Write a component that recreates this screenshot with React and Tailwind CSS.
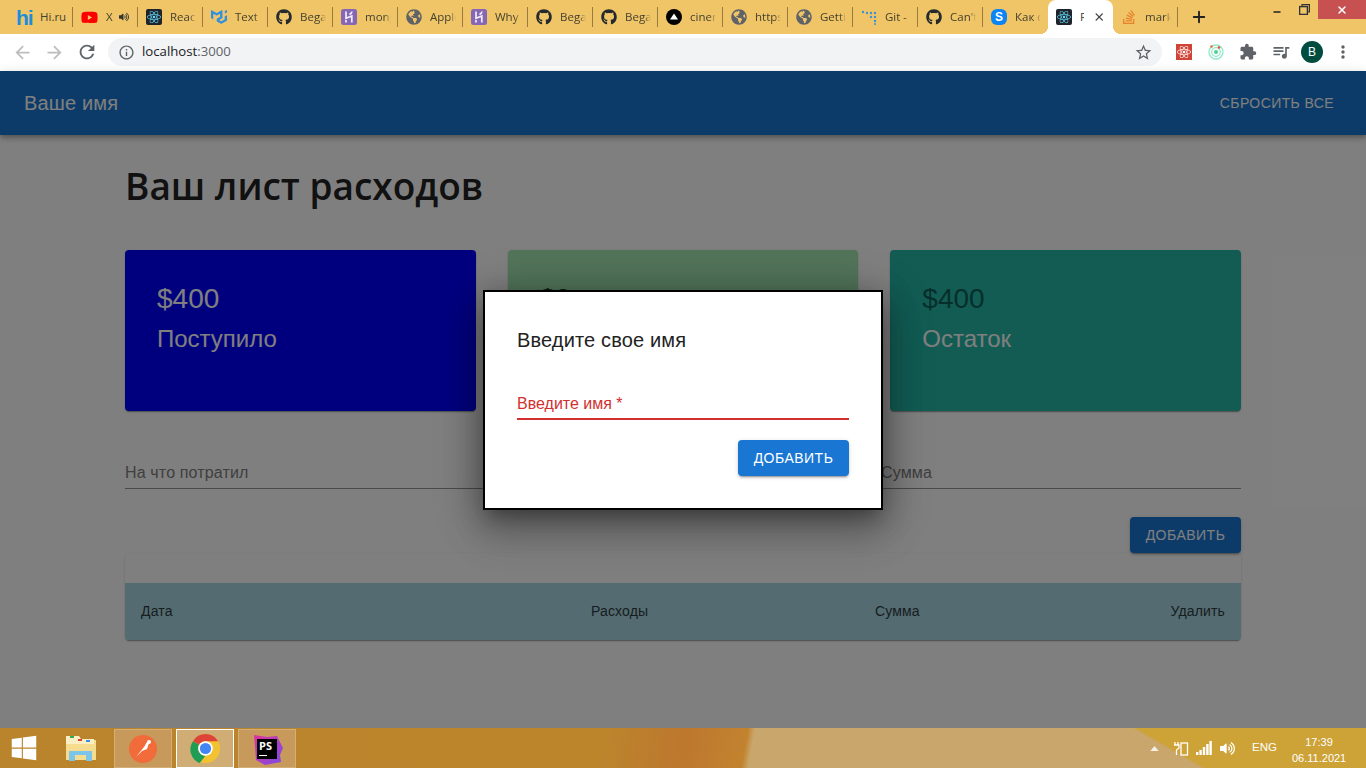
import React from 'react';
import { Plus, X, Minus } from 'lucide-react';
import { FaGithub, FaYoutube, FaVolumeUp, FaGlobeAmericas, FaStackOverflow, FaWindows, FaReact } from 'react-icons/fa';
import { MdArrowBack, MdArrowForward, MdRefresh, MdInfoOutline, MdStarBorder, MdExtension, MdQueueMusic, MdMoreVert } from 'react-icons/md';
import { SiMui } from 'react-icons/si';

const sans = "font-['Liberation_Sans',Arial,sans-serif]";
const ui = "font-['Open_Sans','Noto_Sans',sans-serif]";

const ReactIcon = () => (
  <span className="w-4 h-4 rounded-[2px] bg-[#20232a] flex items-center justify-center shrink-0">
    <FaReact className="w-[14px] h-[14px] text-[#61dafb]" />
  </span>
);
const Github = () => <FaGithub className="w-4 h-4 text-[#24292e] shrink-0" />;
const Globe = () => <FaGlobeAmericas className="w-4 h-4 text-[#5f6368] shrink-0" />;

const Heroku = () => (
  <svg viewBox="0 0 16 16" className="w-4 h-4 shrink-0">
    <rect width="16" height="16" rx="2.5" fill="#8667b5" />
    <path d="M5 2.5 V9.3 L10.8 7 V13.5 M11 2.5 C10.8 4 10 4.8 8.5 5.6 M5 11 V13.5" fill="none" stroke="#f3eefa" strokeWidth="1.7" />
  </svg>
);

const GitDots = () => (
  <svg viewBox="0 0 16 16" className="w-4 h-4 shrink-0" fill="#3f8fd6">
    <circle cx="2" cy="3" r="1.2" /><circle cx="6" cy="4" r="1.2" /><circle cx="10" cy="4" r="1.2" /><circle cx="14" cy="4" r="1.2" />
    <circle cx="10" cy="8" r="1.2" /><circle cx="14" cy="8" r="1.2" /><circle cx="14" cy="12" r="1.2" /><circle cx="14" cy="15" r="1" />
  </svg>
);
const Cinema = () => (
  <svg viewBox="0 0 16 16" className="w-4 h-4 shrink-0">
    <circle cx="8" cy="8" r="8" fill="#000" />
    <path d="M8 4.5 L12 10.5 H4 Z" fill="#fff" />
  </svg>
);
const Skype = () => (
  <span className={`w-4 h-4 rounded-[6px] bg-[#0b84f5] text-white text-[12px] font-bold flex items-center justify-center shrink-0 ${sans}`}>S</span>
);

const tabs = [
  { icon: <span className={`w-4 text-[21px] leading-none font-bold tracking-[-1px] text-[#1c8ddb] ${sans}`}>hi</span>, title: 'Hi.ru', full: true },
  { icon: <FaYoutube className="w-[17px] h-[17px] text-[#f00] shrink-0" />, title: 'X', audio: true },
  { icon: <ReactIcon />, title: 'React' },
  { icon: <SiMui className="w-4 h-4 text-[#2f8fe0] shrink-0" />, title: 'Text' },
  { icon: <Github />, title: 'Bega' },
  { icon: <Heroku />, title: 'mong' },
  { icon: <Globe />, title: 'Apple' },
  { icon: <Heroku />, title: 'Why' },
  { icon: <Github />, title: 'Bega' },
  { icon: <Github />, title: 'Bega' },
  { icon: <Cinema />, title: 'cinem' },
  { icon: <Globe />, title: 'https' },
  { icon: <Globe />, title: 'Getti' },
  { icon: <GitDots />, title: 'Git -' },
  { icon: <Github />, title: "Can't" },
  { icon: <Skype />, title: 'Как с' },
  { icon: <ReactIcon />, title: 'React', active: true },
  { icon: <FaStackOverflow className="w-4 h-4 text-[#e8812b] shrink-0" />, title: 'mark' },
];

function Tab({ tab, hideSep }) {
  if (tab.active) {
    return (
      <div className="relative w-[65px] h-[34px] bg-white rounded-t-lg flex items-center pl-2 pr-2 shrink-0">
        <span className="absolute -left-2 bottom-0 w-2 h-2 bg-[radial-gradient(circle_at_0_0,transparent_8px,white_8px)]" />
        <span className="absolute -right-2 bottom-0 w-2 h-2 bg-[radial-gradient(circle_at_100%_0,transparent_8px,white_8px)]" />
        {tab.icon}
        <span className="ml-2 w-[4px] overflow-hidden text-[11.5px] text-[#3c4043]">{tab.title}</span>
        <X className="w-[14px] h-[14px] ml-[9px] text-[#3c4043]" strokeWidth={2.5} />
      </div>
    );
  }
  const fade = tab.full ? '' : '[mask-image:linear-gradient(to_right,#000_75%,transparent)]';
  return (
    <div className="w-[65px] h-[34px] flex items-center pl-2 shrink-0 relative">
      {tab.icon}
      <span className={`ml-2 text-[11.5px] text-[#45412f] whitespace-nowrap overflow-hidden ${tab.audio ? 'w-[10px]' : 'w-[26px]'} ${fade}`}>{tab.title}</span>
      {tab.audio && <FaVolumeUp className="w-[10px] h-[10px] ml-[3px] text-[#333]" />}
      {!hideSep && <span className="absolute right-0 top-[7px] h-5 w-px bg-[#9a7b3f]" />}
    </div>
  );
}

function TabStrip() {
  return (
    <div className={`h-[34px] bg-[#efc567] flex pl-2 ${ui}`}>
      {tabs.map((t, i) => (
        <Tab key={i} tab={t} hideSep={i === 15 || t.active} />
      ))}
      <div className="flex items-center pl-3 h-[34px]">
        <Plus className="w-[18px] h-[18px] text-[#222]" strokeWidth={2.5} />
      </div>
      <div className="ml-auto flex items-start h-[19px]">
        <Minus className="w-[10px] h-[10px] mt-[7px] mr-[17px] text-[#222]" strokeWidth={4} />
        <svg viewBox="0 0 11 11" className="w-[11px] h-[11px] mt-[4px] mr-[8px]" fill="none" stroke="#333" strokeWidth="1.2">
          <rect x="0.6" y="2.6" width="7.8" height="7.8" fill="#efc567" strokeWidth="1.4" />
          <path d="M3 2.5 V0.6 H10.4 V8 H8.5" />
        </svg>
        <div className="w-[48px] h-[19px] bg-[#c75050] flex items-center justify-center">
          <X className="w-[12px] h-[12px] text-white" strokeWidth={3} />
        </div>
      </div>
    </div>
  );
}

function Toolbar() {
  return (
    <div className={`h-[37px] bg-white flex items-center pb-[1px] ${ui}`}>
      <div className="w-[108px] flex items-center pl-[12px] gap-[11px] shrink-0">
        <MdArrowBack className="w-[21px] h-[21px] text-[#bcbdbf]" />
        <MdArrowForward className="w-[21px] h-[21px] text-[#bcbdbf]" />
        <MdRefresh className="w-[22px] h-[22px] text-[#5f6368]" />
      </div>
      <div className="w-[1054px] h-7 rounded-full bg-[#f1f3f4] flex items-center pl-[10px] pr-[9px]">
        <MdInfoOutline className="w-[17px] h-[17px] text-[#5f6368]" />
        <span className="ml-[7px] text-[13.2px] text-[#202124]">localhost<span className="text-[#5f6368]">:3000</span></span>
        <MdStarBorder className="w-[19px] h-[19px] ml-auto text-[#5f6368]" />
      </div>
      <div className="flex-1 flex items-center pl-[14px]">
        <span className="w-4 h-4 bg-[#d04437] flex items-center justify-center shrink-0">
          <FaReact className="w-[14px] h-[14px] text-white" />
        </span>
        <svg viewBox="0 0 16 16" className="w-4 h-4 ml-4 shrink-0" fill="none">
          <circle cx="8" cy="8" r="7" stroke="#8ee8c8" strokeWidth="1.3" />
          <circle cx="8" cy="8" r="4.3" stroke="#8ee8c8" strokeWidth="1.2" />
          <circle cx="8" cy="8" r="2" fill="#4cd38f" />
          <circle cx="3.5" cy="2.5" r="1.3" fill="#ef6c3b" />
          <circle cx="11" cy="3.5" r="1.3" fill="#ef4b3b" />
        </svg>
        <MdExtension className="w-[18px] h-[18px] ml-[15px] text-[#5f6368] shrink-0" />
        <MdQueueMusic className="w-[20px] h-[20px] ml-[14px] text-[#5f6368] shrink-0" />
        <span className={`w-[22px] h-[22px] ml-[10px] rounded-full bg-[#004d40] text-white text-[12px] flex items-center justify-center shrink-0 ${sans}`}>B</span>
        <MdMoreVert className="w-[20px] h-[20px] ml-[10px] text-[#5f6368] shrink-0" />
      </div>
    </div>
  );
}

function ContainedButton({ children }) {
  return (
    <button className="w-[111px] h-9 rounded bg-[#1976d2] text-white text-sm tracking-[0.5px] uppercase shadow-[0_3px_1px_-2px_rgba(0,0,0,0.2),0_2px_2px_0_rgba(0,0,0,0.14),0_1px_5px_0_rgba(0,0,0,0.12)]">
      {children}
    </button>
  );
}

function Card({ bg, amount, label, amountColor }) {
  return (
    <div className={`h-[161px] rounded ${bg} px-8 pt-8 shadow-[0_2px_1px_-1px_rgba(0,0,0,0.2),0_1px_1px_0_rgba(0,0,0,0.14),0_1px_3px_0_rgba(0,0,0,0.12)]`}>
      <div className={`text-[28px] leading-[34px] ${amountColor}`}>{amount}</div>
      <div className="text-2xl leading-[32px] mt-[7px] text-white">{label}</div>
    </div>
  );
}

function Page() {
  return (
    <div className={`relative flex-1 bg-white ${sans}`}>
      <header className="h-16 bg-[#1976d2] flex items-center justify-between pl-6 pr-8 text-white shadow-[0_2px_4px_-1px_rgba(0,0,0,0.2),0_4px_5px_0_rgba(0,0,0,0.14),0_1px_10px_0_rgba(0,0,0,0.12)]">
        <span className="text-xl tracking-[0.15px]">Ваше имя</span>
        <span className="text-sm tracking-[0.4px] uppercase">Сбросить все</span>
      </header>

      <main className="w-[1116px] ml-[125px]">
        <h1 className={`pt-[26px] text-[37px] leading-[50px] font-semibold text-[#222] ${ui}`}>Ваш лист расходов</h1>

        <div className="grid grid-cols-3 gap-8 mt-[39px]">
          <Card bg="bg-[#0000ff]" amount="$400" label="Поступило" amountColor="text-white" />
          <Card bg="bg-[#a5e8b2]" amount="$0" label="Потрачено" amountColor="text-[#1a3a20]" />
          <Card bg="bg-[#24b8a8]" amount="$400" label="Остаток" amountColor="text-[#0d5f59]" />
        </div>

        <div className="flex gap-[14px] mt-[49px]">
          <div className="flex-1 h-[29px] pt-px border-b border-[#949494] text-base leading-6 tracking-[0.15px] text-[#808080]">На что потратил</div>
          <div className="w-[360px] h-[29px] pt-px border-b border-[#949494] text-base leading-6 tracking-[0.15px] text-[#808080]">Сумма</div>
        </div>

        <div className="flex justify-end mt-7">
          <ContainedButton>Добавить</ContainedButton>
        </div>

        <div className="rounded bg-white pt-[30px] shadow-[0_2px_1px_-1px_rgba(0,0,0,0.2),0_1px_1px_0_rgba(0,0,0,0.14),0_1px_3px_0_rgba(0,0,0,0.12)]">
          <div className="h-[57px] bg-[#a9d6e2] rounded-b flex items-center pb-[2px] px-4 text-sm tracking-[0.15px] text-[#2e3c41]">
            <span className="w-[450px]">Дата</span>
            <span className="w-[284px]">Расходы</span>
            <span>Сумма</span>
            <span className="ml-auto">Удалить</span>
          </div>
        </div>
      </main>

      <div className="absolute inset-0 bg-black/50 flex items-center justify-center">
        <div className="w-[400px] h-[220px] bg-white border-2 border-black px-8 pt-8 shadow-[0_11px_15px_-7px_rgba(0,0,0,0.2),0_24px_38px_3px_rgba(0,0,0,0.14),0_9px_46px_8px_rgba(0,0,0,0.12),0_8px_30px_0_rgba(0,0,0,0.3)]">
          <div className="text-xl leading-[32px] tracking-[0.15px] text-[#222]">Введите свое имя</div>
          <div className="mt-[36px] h-[28px] border-b-2 border-[#d32f2f] text-base leading-6 text-[#d32f2f]">Введите имя *</div>
          <div className="flex justify-end mt-[20px]">
            <ContainedButton>Добавить</ContainedButton>
          </div>
        </div>
      </div>
    </div>
  );
}

function ChromeLogo() {
  return (
    <svg viewBox="0 0 32 32" className="w-[31px] h-[31px]">
      <circle cx="16" cy="16" r="15" fill="#f2c230" />
      <path d="M16 1 A15 15 0 0 1 29 8.5 L16 8.5 A7.5 7.5 0 0 0 9.5 12.2 L3 8.5 A15 15 0 0 1 16 1 Z" fill="#db4437" />
      <path d="M3 8.5 L9.5 12.2 A7.5 7.5 0 0 0 16 23.5 L10 31 A15 15 0 0 1 3 8.5 Z" fill="#1f9d55" />
      <circle cx="16" cy="16" r="7.5" fill="#fff" />
      <circle cx="16" cy="16" r="5.8" fill="#4285f4" />
    </svg>
  );
}

function Taskbar() {
  const item = 'w-[58px] h-[39px] mt-px flex items-center justify-center border';
  return (
    <div className={`h-10 flex items-start bg-[linear-gradient(30deg,transparent_83.7%,#cda236_84%),linear-gradient(100deg,#b9842c_0%,#bc852c_44%,#bd772e_50%,#c2832f_54.5%,#c9a66b_55%,#c9a66b_100%)] ${ui}`}>
      <div className="w-[114px] h-10 flex items-center pl-[10px]">
        <FaWindows className="w-[28px] h-[28px] text-white" />
        <svg viewBox="0 0 32 28" className="w-8 h-7 ml-[27px]">
          <path d="M1 6 H31 V26 H1 Z" fill="#f6dc8f" />
          <path d="M1 2 H14 L16 5 H29 V10 H1 Z" fill="#fbeec2" />
          <rect x="5" y="2" width="4" height="2" fill="#35a853" />
          <rect x="13" y="5" width="4" height="2" fill="#d9432f" />
          <rect x="21" y="6" width="4" height="2" fill="#3b8ee0" />
          <path d="M4 17 H27 V27 H21 V21 H10 V27 H4 Z" fill="#7cc4e8" />
        </svg>
      </div>
      <div className={`${item} border-[#d3ae76] bg-[#c79a5c]`}>
        <svg viewBox="0 0 28 28" className="w-7 h-7">
          <circle cx="14" cy="14" r="14" fill="#f26b3a" />
          <path d="M7 22 L15 12 L18 7 L20 8 L18 14 L13 16 Z" fill="#fff" />
          <circle cx="20" cy="7" r="2" fill="#fff" />
        </svg>
      </div>
      <div className={`${item} ml-1 border-white bg-[#d1ad76]`}><ChromeLogo /></div>
      <div className={`${item} ml-1 border-[#d3ae76] bg-[#c79a5c]`}>
        <div className="relative w-[32px] h-[32px] flex items-center justify-center">
          <svg viewBox="0 0 32 32" className="absolute inset-0 w-full h-full">
            <defs>
              <linearGradient id="psBlob" x1="0" y1="0" x2="1" y2="1">
                <stop offset="0" stopColor="#e0319b" />
                <stop offset="1" stopColor="#7a4be8" />
              </linearGradient>
            </defs>
            <path d="M3 2 L16 4 L26 3 L32 15 L29 22 L30 29 L14 32 L5 27 L4 14 Z" fill="url(#psBlob)" />
          </svg>
          <div className="relative w-[20px] h-[20px] bg-black text-white text-[11px] font-bold leading-[11px] pl-[2px] pt-[1px]">
            PS
            <div className="w-[8px] h-px bg-white mt-[4px]" />
          </div>
        </div>
      </div>
      <div className={`ml-auto h-10 flex items-center text-white ${sans}`}>
        <svg viewBox="0 0 10 6" className="w-[9px] h-[5px]" fill="#f4f0e6"><path d="M5 0 L10 6 H0 Z" /></svg>
        <svg viewBox="0 0 16 16" className="w-4 h-4 ml-[14px]" fill="none" stroke="#fff" strokeWidth="1.3">
          <rect x="8" y="3" width="6.5" height="12" />
          <path d="M2 2 V5 M5 2 V5 M1 5 H6 V8 L3.5 10 V15" />
        </svg>
        <svg viewBox="0 0 16 14" className="w-4 h-[14px] ml-[7px]" fill="#fff">
          <rect x="0" y="11" width="2.4" height="3" /><rect x="3.4" y="9" width="2.4" height="5" /><rect x="6.8" y="6" width="2.4" height="8" /><rect x="10.2" y="3" width="2.4" height="11" /><rect x="13.4" y="0" width="2.4" height="14" />
        </svg>
        <FaVolumeUp className="w-[15px] h-[15px] ml-[8px]" />
        <span className="ml-[17px] text-[11.5px]">ENG</span>
        <div className="w-[54px] ml-[15px] mr-[20px] pt-[3px] text-center text-[11px] leading-[16px]">
          <div>17:39</div>
          <div>06.11.2021</div>
        </div>
      </div>
    </div>
  );
}

export default function App() {
  return (
    <div className="w-[1366px] h-[768px] flex flex-col overflow-hidden">
      <TabStrip />
      <Toolbar />
      <Page />
      <Taskbar />
    </div>
  );
}
